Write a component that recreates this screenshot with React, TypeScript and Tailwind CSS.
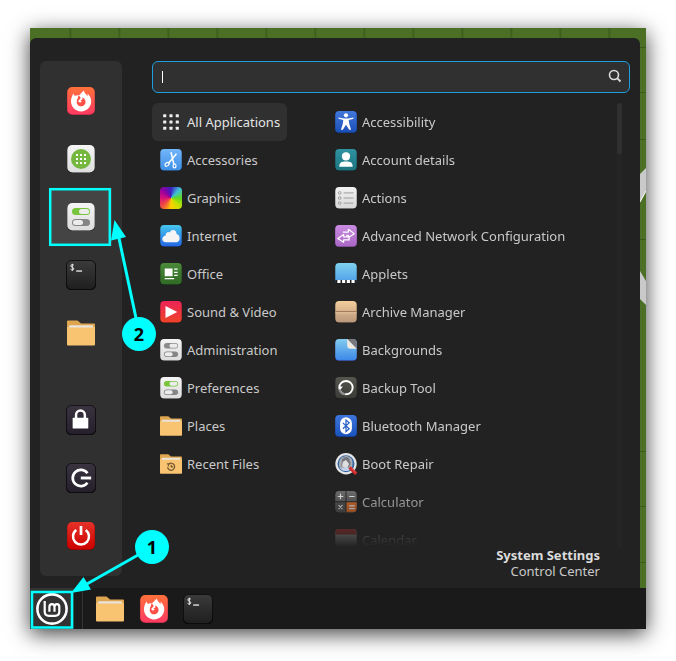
import type { ReactNode } from "react";

/* ---------- icons ---------- */

function Svg({ size, children }: { size: number; children: ReactNode }) {
  return (
    <svg width={size} height={size} viewBox="0 0 28 28" className="shrink-0" aria-hidden="true">
      {children}
    </svg>
  );
}

function Tile({ id, from, to, edge = "#111" }: { id: string; from: string; to: string; edge?: string }) {
  return (
    <>
      <defs>
        <linearGradient id={id} x1="0" y1="0" x2="0" y2="1">
          <stop offset="0" stopColor={from} />
          <stop offset="1" stopColor={to} />
        </linearGradient>
      </defs>
      <rect x="0" y="0.6" width="28" height="27.4" rx="5" fill={edge} />
      <rect x="0.3" y="0" width="27.4" height="27.4" rx="5" fill={`url(#${id})`} />
    </>
  );
}

function Firefox({ id }: { id: string }) {
  return (
    <Svg size={28}>
      <Tile id={id} from="#ff7139" to="#ff3a62" edge="#8c2433" />
      <path
        fill="#fff"
        d="M4 14.600C4 11.500 4.800 9.600 6.400 6.600L7.800 9C9 8.200 10.400 8 11.900 8.300C13.600 7.600 14.400 5.400 16.800 3.600C17 6 19.400 7.200 20.400 9.400L20.700 6.800C23 9 24.200 11.400 24.200 14.600C24.200 20 19.700 24.500 14.100 24.500C8.500 24.500 4 20 4 14.600Z"
      />
      <path
        fill="#ff5048"
        d="M9.800 14C9.300 17.200 11.300 19.300 14 19.300C17 19.300 18.900 16.900 18.500 14.200C18.200 12.500 17 11 15 10.600C16 11.900 15.600 12.800 14.500 12.900C13.200 13 13.500 14.300 15 14.600C14 16 11.800 15.500 11.200 13.900C12 12.700 13.200 12.300 13.700 11L11.900 8.300C11.300 9.300 10.900 10 11 10.900C10.300 11.600 9.900 12.800 9.800 14Z"
      />
    </Svg>
  );
}

function SoftwareManager() {
  return (
    <Svg size={28}>
      <Tile id="swm" from="#f5f5f5" to="#dedede" />
      <circle cx="14" cy="14" r="10" fill="#76b83f" />
      {[9, 13, 17].flatMap((y) =>
        [9, 13, 17].map((x) => <rect key={`${x}-${y}`} x={x} y={y} width="2" height="2" rx="0.3" fill="#fff" />),
      )}
    </Svg>
  );
}

function Switches({ id, size, on }: { id: string; size: number; on: string }) {
  return (
    <Svg size={size}>
      <Tile id={id} from="#f4f4f4" to="#dcdcdc" />
      <rect x="5" y="5" width="18" height="7" rx="3.5" fill={on} />
      <rect x="12" y="6" width="10.200" height="5" rx="2.500" fill="#ececec" />
      <rect x="5" y="16" width="18" height="7" rx="3.500" fill="#858585" />
      <rect x="6" y="17" width="10" height="5" rx="2.500" fill="#ececec" />
    </Svg>
  );
}

function Terminal({ id }: { id: string }) {
  return (
    <Svg size={30}>
      <Tile id={id} from="#3b3b3b" to="#1f1f1f" edge="#000" />
      <rect x="0.400" y="0.400" width="27.200" height="27.200" rx="5" fill="none" stroke="#0c0c0c" strokeWidth="0.900" />
      <path d="M7.300 4.800C6.400 4 4.500 4.200 4.500 5.500C4.500 7 7.300 6.500 7.300 8.200C7.300 9.500 5.200 9.600 4.300 8.700M5.900 3.500V10.200" fill="none" stroke="#eee" strokeWidth="0.900" />
      <path d="M9.500 10.300H15" stroke="#fff" strokeWidth="1.100" />
    </Svg>
  );
}

function Folder({ size, recent = false }: { size: number; recent?: boolean }) {
  return (
    <Svg size={size}>
      <path d="M0 2.500Q0 1.500 1 1.500H10.500L14 4.500H27Q28 4.500 28 5.500V20H0Z" fill="#dfa650" />
      <rect x="2" y="6.200" width="24" height="5" rx="1" fill="#e9e3dc" />
      <path d="M0 8H1.500L3 8.500H25L26.500 8H28V25.500Q28 26.500 27 26.500H1Q0 26.500 0 25.500Z" fill="#f8c471" />
      {recent && (
        <path d="M9.700 18A4.500 4.500 0 1 0 11 14.300M9 13.500L11 14.300L10.400 17M14.300 14.800V17.600H17" fill="none" stroke="#72572f" strokeWidth="1.500" />
      )}
    </Svg>
  );
}

function Lock() {
  return (
    <Svg size={30}>
      <Tile id="lock" from="#393440" to="#241f2b" edge="#000" />
      <rect x="0.400" y="0.400" width="27.200" height="27.200" rx="5" fill="none" stroke="#0f0d12" strokeWidth="0.800" />
      <rect x="6.200" y="12" width="14.600" height="10" rx="0.600" fill="#fff" />
      <path d="M9.400 12.500V9.200A4.100 4.100 0 0 1 17.600 9.200V12.500" fill="none" stroke="#fff" strokeWidth="2.300" />
    </Svg>
  );
}

function Logout() {
  return (
    <Svg size={30}>
      <Tile id="logout" from="#393440" to="#241f2b" edge="#000" />
      <rect x="0.400" y="0.400" width="27.200" height="27.200" rx="5" fill="none" stroke="#0f0d12" strokeWidth="0.800" />
      <path d="M20 9.500A7.600 7.600 0 1 0 20 18.500" fill="none" stroke="#fff" strokeWidth="2.500" />
      <path d="M13.800 14H23.500" stroke="#fff" strokeWidth="2.700" />
    </Svg>
  );
}

function Power() {
  return (
    <Svg size={28}>
      <Tile id="power" from="#e63228" to="#cc0000" edge="#7a0000" />
      <path d="M9.300 8A8 8 0 1 0 18.700 8" fill="none" stroke="#fff" strokeWidth="2.500" />
      <path d="M14 4V13" stroke="#fff" strokeWidth="2.700" />
    </Svg>
  );
}

function MintLogo() {
  return (
    <svg width="32" height="32" viewBox="0 0 32 32" aria-hidden="true">
      <circle cx="16" cy="16" r="14.600" fill="none" stroke="#fff" strokeWidth="2.600" />
      <path
        d="M8.700 8V18.500Q8.700 22.800 13 22.800H19Q23.300 22.800 23.300 18.500V14Q23.300 11.200 21 11.200Q18.500 11.200 18.500 14V18.700M18.500 14Q18.500 11.200 16 11.200Q13.400 11.200 13.400 14V18.700"
        fill="none"
        stroke="#fff"
        strokeWidth="2.200"
      />
    </svg>
  );
}

const GridDots = () => (
  <Svg size={22}>
    {[4, 12, 20].flatMap((y) =>
      [4, 12, 20].map((x) => <rect key={`${x}-${y}`} x={x} y={y} width="4" height="4" rx="0.800" fill="#eee" />),
    )}
  </Svg>
);

const Scissors = () => (
  <Svg size={22}>
    <Tile id="acc" from="#73b6fb" to="#3f8fe6" />
    <path d="M14 4L17.500 19M21 6L10.500 18.500" fill="none" stroke="#fff" strokeWidth="1.900" />
    <ellipse cx="9" cy="19.500" rx="2.900" ry="2" fill="none" stroke="#fff" strokeWidth="1.500" transform="rotate(-35 9 19.500)" />
    <ellipse cx="18.500" cy="21.500" rx="1.900" ry="2.600" fill="none" stroke="#fff" strokeWidth="1.500" />
  </Svg>
);

const Graphics = () => (
  <span className="block size-[22px] shrink-0 rounded bg-[conic-gradient(#3a1fc0,#40c0d8_45deg,#60d820_90deg,#c8e000_135deg,#ffd000_180deg,#f05040_225deg,#d8107a_270deg,#9000a0_315deg,#3a1fc0)]" />
);

const Cloud = () => (
  <Svg size={22}>
    <Tile id="net" from="#46c7ee" to="#2366e2" />
    <path d="M7.500 22C1.500 22 1.600 14 7 13.600C7 9 11 8 12.500 9.500C14 4.500 21.500 5.500 21 11.500C26.500 12.500 26.500 22 20.500 22Z" fill="#f4f4f4" />
  </Svg>
);

const Office = () => (
  <Svg size={22}>
    <Tile id="office" from="#4a8a39" to="#2f6a25" />
    <path d="M6 7H16V17H6ZM6 19H18V20.800H6ZM18 7H22.500V8.700H18ZM18 11H22.500V12.700H18ZM18 15H22.500V16.700H18Z" fill="#fff" />
  </Svg>
);

const Play = () => (
  <Svg size={22}>
    <Tile id="video" from="#ed2457" to="#ef4329" />
    <path d="M7 6.500L22 14L7 21.500Z" fill="#fff" />
  </Svg>
);

const Accessibility = () => (
  <Svg size={22}>
    <Tile id="a11y" from="#4277dc" to="#1a4fb8" edge="#102c66" />
    <circle cx="14" cy="5.500" r="2.700" fill="#fff" />
    <path d="M4.500 8.200L11.500 9.500H16.500L23.500 8.200V10L17.500 11.500L18 16L20.500 24H18L14 17.500L10 24H7.500L10 16L10.500 11.500L4.500 10Z" fill="#fff" />
  </Svg>
);

const Account = () => (
  <Svg size={22}>
    <Tile id="account" from="#2f93a2" to="#1c7480" />
    <path d="M14 4C17.500 4 19.600 6.300 19.200 9.500C18.900 12.800 17.500 14.700 14 14.700C10.500 14.700 9.100 12.800 8.800 9.500C8.400 6.300 10.500 4 14 4ZM5.500 22.500C5.500 17.500 8 16 14 16C20 16 22.500 17.500 22.500 22.500Z" fill="#fff" />
  </Svg>
);

const Actions = () => (
  <Svg size={22}>
    <Tile id="actions" from="#f1f1f1" to="#d8d8d8" />
    {[7.5, 14, 20.5].map((y) => (
      <g key={y} fill="none" stroke="#999" strokeWidth="1.200">
        <circle cx="6" cy={y} r="1.700" />
        <path d={`M11 ${y}H23.5`} />
      </g>
    ))}
  </Svg>
);

const Network = () => (
  <Svg size={22}>
    <Tile id="nm" from="#c98be0" to="#a967c5" edge="#5c336c" />
    <path d="M10 9H17V5.500L24.500 11L17 16V13H14M18 15H11V12L3.500 17.200L11 22V19H18Z" fill="none" stroke="#fff" strokeWidth="1.500" strokeLinejoin="round" />
  </Svg>
);

const Applets = () => (
  <Svg size={22}>
    <Tile id="applets" from="#81d2ee" to="#4898e9" />
    <path d="M0.300 21.500H27.700V23Q27.700 28 23 28H5Q0.300 28 0.300 23Z" fill="#202020" />
    <path d="M3 21.500H7V25.500H3ZM9 21.500H13V25.500H9ZM15 21.500H19V25.500H15ZM21 21.500H25V25.500H21Z" fill="#fff" />
  </Svg>
);

const Archive = () => (
  <Svg size={22}>
    <Tile id="archive" from="#f3cd9b" to="#b9977a" />
    <path d="M0.500 13.500H27.500" stroke="#a27b5c" strokeWidth="1.500" />
    <path d="M0.500 15H27.500" stroke="#e5caad" strokeWidth="1" />
  </Svg>
);

const Backgrounds = () => (
  <Svg size={22}>
    <Tile id="bgs" from="#82cced" to="#3b87ea" edge="#33205c" />
    <path d="M15.500 0H23Q27.700 0 27.700 5V13Z" fill="#77777c" />
    <path d="M15.500 0V8Q15.500 12.500 20 12.500H27.700Z" fill="#f0e9e1" />
  </Svg>
);

const Backup = () => (
  <Svg size={22}>
    <Tile id="backup" from="#55574f" to="#383a34" />
    <circle cx="14" cy="13.500" r="8.500" fill="none" stroke="#fff" strokeWidth="2.500" />
    <path d="M13 22A8.500 8.500 0 0 1 5.700 15.500" fill="none" stroke="#888" strokeWidth="2.700" />
    <path d="M4.500 12L10 12L7 16Z" fill="#fff" />
  </Svg>
);

const Bluetooth = () => (
  <Svg size={22}>
    <Tile id="bt" from="#3e75dc" to="#1a52bd" edge="#102c66" />
    <rect x="6.500" y="3" width="15" height="21.500" rx="7.500" fill="#fff" />
    <path d="M10 10L18 17.500L14 21V6.500L18 10L10 17.500" fill="none" stroke="#2860c9" strokeWidth="1.600" />
  </Svg>
);

const BootRepair = () => (
  <Svg size={22}>
    <circle cx="14" cy="13.700" r="13.600" fill="#e6e6e6" />
    <circle cx="14" cy="13.700" r="10.800" fill="#3366a8" />
    <path d="M6.500 20C3 13 6 4.500 13 4C21 3.500 24 10 21.500 19C17 24.500 10 24 6.500 20Z" fill="#a9adb2" />
    <path d="M9 8Q14 3 18 7L20 14L16 20L8 17Z" fill="#73777d" />
    <path d="M10 11L14 9L18 14L15 20L9 17Z" fill="#dedede" />
    <path d="M7 20Q14 16 21 20Q14 26 7 20Z" fill="#c2d1eb" />
    <path d="M18.500 18.500L27 26.500" stroke="#d12a2a" strokeWidth="4.200" />
    <path d="M21 19.500L27 25" stroke="#f07070" strokeWidth="0.900" />
  </Svg>
);

const Calculator = () => (
  <Svg size={22}>
    <Tile id="calc" from="#777" to="#555" />
    <path d="M0.500 14H14V27H5Q0.500 27 0.500 22Z" fill="#555" />
    <path d="M14 14H27.500V22Q27.500 27 23 27H14Z" fill="#ed732b" />
    <path d="M14 0V28M0 13.700H28" stroke="#1e1e1e" strokeWidth="1.100" />
    <path d="M3.500 7H10.500M7 3.500V10.500M18 7H25M4.500 18L9.500 23M9.500 18L4.500 23M18 19H25M18 22.500H25" fill="none" stroke="#fff" strokeWidth="1.500" />
  </Svg>
);

const Calendar = () => (
  <Svg size={22}>
    <Tile id="cal" from="#f4f4f4" to="#ddd" />
    <path d="M0.300 7V5Q0.300 0 5 0H23Q27.700 0 27.700 5V7Z" fill="#e2372c" />
  </Svg>
);

/* ---------- menu data ---------- */

type Entry = { label: string; icon: ReactNode };

const categories: Entry[] = [
  { label: "All Applications", icon: <GridDots /> },
  { label: "Accessories", icon: <Scissors /> },
  { label: "Graphics", icon: <Graphics /> },
  { label: "Internet", icon: <Cloud /> },
  { label: "Office", icon: <Office /> },
  { label: "Sound & Video", icon: <Play /> },
  { label: "Administration", icon: <Switches id="adm" size={22} on="#8b8b8b" /> },
  { label: "Preferences", icon: <Switches id="pref" size={22} on="#77c53a" /> },
  { label: "Places", icon: <Folder size={22} /> },
  { label: "Recent Files", icon: <Folder size={22} recent /> },
];

const apps: Entry[] = [
  { label: "Accessibility", icon: <Accessibility /> },
  { label: "Account details", icon: <Account /> },
  { label: "Actions", icon: <Actions /> },
  { label: "Advanced Network Configuration", icon: <Network /> },
  { label: "Applets", icon: <Applets /> },
  { label: "Archive Manager", icon: <Archive /> },
  { label: "Backgrounds", icon: <Backgrounds /> },
  { label: "Backup Tool", icon: <Backup /> },
  { label: "Bluetooth Manager", icon: <Bluetooth /> },
  { label: "Boot Repair", icon: <BootRepair /> },
  { label: "Calculator", icon: <Calculator /> },
  { label: "Calendar", icon: <Calendar /> },
];

const favorites: Entry[] = [
  { label: "Firefox", icon: <Firefox id="ff-side" /> },
  { label: "Software Manager", icon: <SoftwareManager /> },
  { label: "System Settings", icon: <Switches id="settings" size={28} on="#77c53a" /> },
  { label: "Terminal", icon: <Terminal id="term-side" /> },
  { label: "Files", icon: <Folder size={28} /> },
];

const session: Entry[] = [
  { label: "Lock screen", icon: <Lock /> },
  { label: "Log out", icon: <Logout /> },
  { label: "Shut down", icon: <Power /> },
];

const pinned: Entry[] = [
  { label: "Files", icon: <Folder size={28} /> },
  { label: "Firefox", icon: <Firefox id="ff-bar" /> },
  { label: "Terminal", icon: <Terminal id="term-bar" /> },
];

/* ---------- parts ---------- */

function MenuRow({ label, icon, active = false }: Entry & { active?: boolean }) {
  return (
    <li>
      <button
        type="button"
        className={`flex h-[38px] w-full items-center gap-1 rounded-md px-2 text-left whitespace-nowrap ${active ? "bg-[#303030] text-[#e4e4e4]" : ""}`}
      >
        {icon}
        <span className="pl-px">{label}</span>
      </button>
    </li>
  );
}

function SideButton({ label, icon }: Entry) {
  return (
    <button
      type="button"
      aria-label={label}
      className={`flex h-[58px] w-full items-center justify-center ${label === "System Settings" ? "bg-[#444]" : ""}`}
    >
      {icon}
    </button>
  );
}

function WallpaperEdge() {
  return (
    <svg width="6" height="560" viewBox="0 0 6 560" className="absolute top-0 right-0" aria-hidden="true">
      <path d="M0 0H6V560H0Z" fill="#4b6f25" />
      <path d="M0 19.500H6M0 64.500H6M0 111.500H6M0 211.500H6M0 423.500H6M0 478.500H6M0 534.500H6" stroke="#3b5b1c" />
      <path d="M0 146L6 140V163L0 174Z" fill="#c9c9c9" />
      <path d="M0 174L6 163" stroke="#fff" />
      <path d="M0 243L6 253V277L0 271Z" fill="#c9c9c9" />
    </svg>
  );
}

function Callouts() {
  const badge =
    "absolute flex size-[34px] items-center justify-center rounded-full bg-[#00ffff] text-lg leading-none font-bold text-black";
  return (
    <div className="pointer-events-none absolute inset-0">
      <svg width="200" height="601" viewBox="30 28 200 601" className="absolute top-0 left-0" aria-hidden="true">
        <g fill="none" stroke="#00ffff" strokeWidth="2.500">
          <rect x="50.200" y="189.200" width="59.600" height="55.600" />
          <rect x="32" y="592" width="40" height="35.500" />
          <path d="M136 318L118.500 236M138 555L86 584.500" strokeWidth="3" />
        </g>
        <path d="M114.500 220L126 237L111 240.500ZM71 593L83.500 577L91 589.500Z" fill="#00ffff" />
      </svg>
      <span className={`${badge} top-[289px] left-[92px]`}>2</span>
      <span className={`${badge} top-[502px] left-[105px]`}>1</span>
    </div>
  );
}

export default function App() {
  return (
    <div className="bg-white px-[30px] pt-7 pb-8 font-['Noto_Sans',sans-serif] text-[13px] leading-4 text-[#c9c9c9]">
      <div className="relative bg-[#4b6f25] bg-[repeating-linear-gradient(90deg,#4b6f25_0,#4b6f25_39px,#3b5b1c_40px,#4b6f25_42px,#4b6f25_49px)] pt-2.5 shadow-[0_5px_20px_rgba(0,0,0,0.75)]">
        <WallpaperEdge />

        <main className="relative mr-1.5 flex rounded-t-md bg-[#222] px-2.5 pt-[23px] pb-[9px]">
          <nav aria-label="Favorites" className="mb-[3px] flex w-[82px] shrink-0 flex-col justify-between rounded-md bg-[#303030] px-2.5 py-[11px]">
            <div>{favorites.map((f) => <SideButton key={f.label} {...f} />)}</div>
            <div>{session.map((s) => <SideButton key={s.label} {...s} />)}</div>
          </nav>

          <div className="ml-[30px] min-w-0 flex-1">
            <div className="relative">
              <input
                type="text"
                aria-label="Search applications"
                className="block h-8 w-full rounded-md border border-[#1f9ede] bg-[#303030] px-2.5 outline-none"
              />
              <span className="absolute top-2.5 left-2.5 h-3 w-px bg-white" />
              <svg width="14" height="14" viewBox="0 0 14 14" className="absolute top-2 right-2" aria-hidden="true">
                <circle cx="6" cy="6" r="4.500" fill="none" stroke="#ddd" strokeWidth="1.600" />
                <path d="M9.200 9.200L12.500 12.500" stroke="#ddd" strokeWidth="1.800" />
              </svg>
            </div>

            <div className="mt-2.5 flex">
              <ul className="w-[135px] shrink-0">
                {categories.map((c, i) => <MenuRow key={c.label} {...c} active={i === 0} />)}
              </ul>
              <ul className="ml-10 h-[444px] min-w-0 flex-1 overflow-hidden [mask-image:linear-gradient(#000_380px,transparent)]">
                {apps.map((a) => <MenuRow key={a.label} {...a} />)}
              </ul>
              <div className="mr-2 w-[5px] shrink-0 bg-[#252525]">
                <div className="h-[51px] rounded-full bg-[#303030]" />
              </div>
            </div>

            <div className="mr-[30px] text-right">
              <p className="font-bold text-[#dcdcdc]">System Settings</p>
              <p>Control Center</p>
            </div>
          </div>
        </main>

        <footer className="relative flex h-[41px] items-center bg-[#1a1a1a]">
          <button type="button" aria-label="Menu" className="flex h-full w-11 items-center justify-center bg-[#333]">
            <MintLogo />
          </button>
          <span className="ml-2 h-full w-px bg-[#333]" />
          <div className="ml-[5px] flex">
            {pinned.map((p) => (
              <button key={p.label} type="button" aria-label={p.label} className="flex h-[41px] w-11 items-center justify-center">
                {p.icon}
              </button>
            ))}
          </div>
        </footer>

        <Callouts />
      </div>
    </div>
  );
}
